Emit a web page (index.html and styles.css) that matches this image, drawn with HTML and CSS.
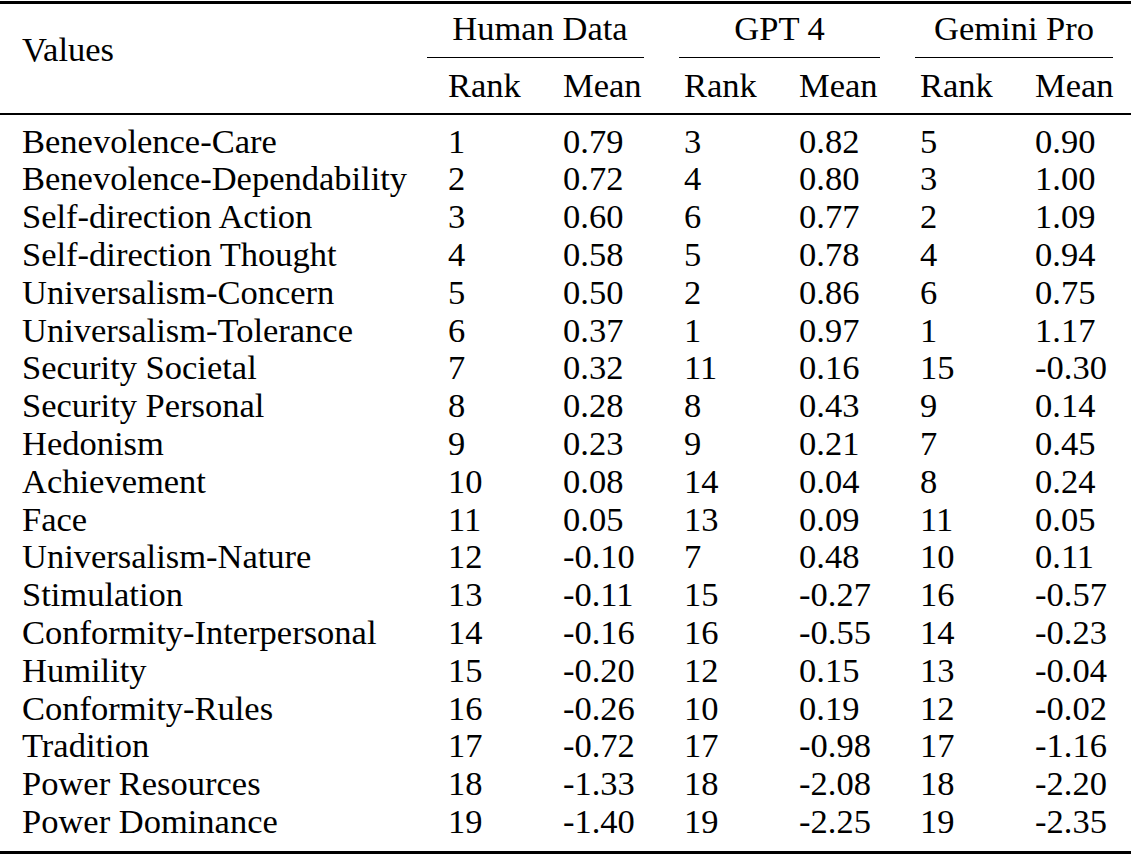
FILE: index.html
```html
<!DOCTYPE html>
<html lang="en">
<head>
<meta charset="utf-8">
<title>Values ranking</title>
<link rel="stylesheet" href="styles.css">
</head>
<body>
<table class="booktabs">
  <colgroup>
    <col class="c-name">
    <col class="c-rank">
    <col class="c-mean">
    <col class="c-rank">
    <col class="c-mean">
    <col class="c-rank">
    <col class="c-mean-last">
  </colgroup>
  <thead>
    <tr class="h1">
      <th class="values" rowspan="2">Values</th>
      <th class="group group-human" colspan="2"><div class="cmid">Human Data</div></th>
      <th class="group" colspan="2"><div class="cmid">GPT 4</div></th>
      <th class="group group-last" colspan="2"><div class="cmid">Gemini Pro</div></th>
    </tr>
    <tr class="h2">
      <th>Rank</th><th>Mean</th>
      <th>Rank</th><th>Mean</th>
      <th>Rank</th><th>Mean</th>
    </tr>
  </thead>
  <tbody>
    <tr><td>Benevolence-Care</td><td>1</td><td>0.79</td><td>3</td><td>0.82</td><td>5</td><td>0.90</td></tr>
    <tr><td>Benevolence-Dependability</td><td>2</td><td>0.72</td><td>4</td><td>0.80</td><td>3</td><td>1.00</td></tr>
    <tr><td>Self-direction Action</td><td>3</td><td>0.60</td><td>6</td><td>0.77</td><td>2</td><td>1.09</td></tr>
    <tr><td>Self-direction Thought</td><td>4</td><td>0.58</td><td>5</td><td>0.78</td><td>4</td><td>0.94</td></tr>
    <tr><td>Universalism-Concern</td><td>5</td><td>0.50</td><td>2</td><td>0.86</td><td>6</td><td>0.75</td></tr>
    <tr><td>Universalism-Tolerance</td><td>6</td><td>0.37</td><td>1</td><td>0.97</td><td>1</td><td>1.17</td></tr>
    <tr><td>Security Societal</td><td>7</td><td>0.32</td><td>11</td><td>0.16</td><td>15</td><td>-0.30</td></tr>
    <tr><td>Security Personal</td><td>8</td><td>0.28</td><td>8</td><td>0.43</td><td>9</td><td>0.14</td></tr>
    <tr><td>Hedonism</td><td>9</td><td>0.23</td><td>9</td><td>0.21</td><td>7</td><td>0.45</td></tr>
    <tr><td>Achievement</td><td>10</td><td>0.08</td><td>14</td><td>0.04</td><td>8</td><td>0.24</td></tr>
    <tr><td>Face</td><td>11</td><td>0.05</td><td>13</td><td>0.09</td><td>11</td><td>0.05</td></tr>
    <tr><td>Universalism-Nature</td><td>12</td><td>-0.10</td><td>7</td><td>0.48</td><td>10</td><td>0.11</td></tr>
    <tr><td>Stimulation</td><td>13</td><td>-0.11</td><td>15</td><td>-0.27</td><td>16</td><td>-0.57</td></tr>
    <tr><td>Conformity-Interpersonal</td><td>14</td><td>-0.16</td><td>16</td><td>-0.55</td><td>14</td><td>-0.23</td></tr>
    <tr><td>Humility</td><td>15</td><td>-0.20</td><td>12</td><td>0.15</td><td>13</td><td>-0.04</td></tr>
    <tr><td>Conformity-Rules</td><td>16</td><td>-0.26</td><td>10</td><td>0.19</td><td>12</td><td>-0.02</td></tr>
    <tr><td>Tradition</td><td>17</td><td>-0.72</td><td>17</td><td>-0.98</td><td>17</td><td>-1.16</td></tr>
    <tr><td>Power Resources</td><td>18</td><td>-1.33</td><td>18</td><td>-2.08</td><td>18</td><td>-2.20</td></tr>
    <tr><td>Power Dominance</td><td>19</td><td>-1.40</td><td>19</td><td>-2.25</td><td>19</td><td>-2.35</td></tr>
  </tbody>
</table>
</body>
</html>
```

FILE: styles.css
```css
html, body {
  margin: 0;
  padding: 0;
  background: #ffffff;
}

body {
  padding-top: 1px;
  color: #000000;
  font-family: "Liberation Serif", "Times New Roman", serif;
}

.booktabs {
  width: 1131px;
  table-layout: fixed;
  border-collapse: separate;
  border-spacing: 0;
  border-top: 3px solid #000;
  border-bottom: 3px solid #000;
  font-size: 34.5px;
  line-height: 37.8px;
}

.c-name { width: 426px; }
.c-rank { width: 115px; }
.c-mean { width: 121px; }
.c-mean-last { width: 118px; }

.booktabs th,
.booktabs td {
  padding: 0 0 0 22px;
  text-align: left;
  font-weight: normal;
  white-space: nowrap;
  vertical-align: top;
}

/* header */
.booktabs th.values {
  padding-top: 26.6px;
  border-bottom: 2px solid #000;
}

.booktabs th.group {
  padding: 5.6px 0 0 0;
}

.cmid {
  margin: 0 18px 0 17px;
  padding-bottom: 9.6px;
  border-bottom: 1px solid #000;
  text-align: center;
}

.group-human .cmid {
  margin-left: 1px;
  padding-left: 9px;
}

.group-last .cmid {
  margin-right: 18px;
}

.h2 th {
  padding-top: 8.6px;
  padding-bottom: 8.6px;
  border-bottom: 2px solid #000;
}

/* body */
.booktabs tbody td {
  height: 37.8px;
}

.booktabs tbody tr:first-child td {
  padding-top: 7.6px;
}

.booktabs tbody tr:last-child td {
  padding-bottom: 10.6px;
}
```
